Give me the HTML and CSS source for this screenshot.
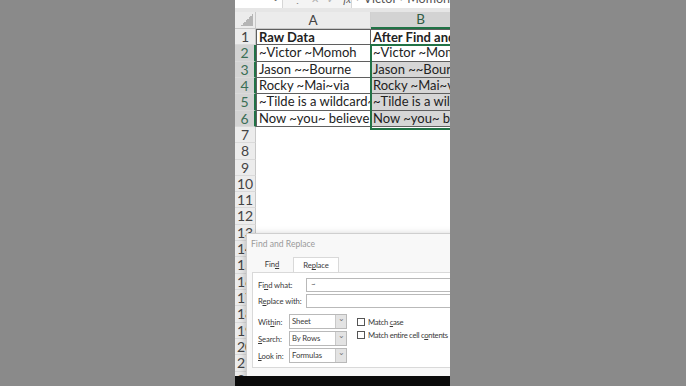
FILE: index.html
```html
<!DOCTYPE html>
<html lang="en">
<head>
    <meta charset="UTF-8">
    <title>Find and Replace</title>
    <link rel="stylesheet" href="styles.css">
</head>
<body>
    <div class="frame">
        <!-- formula bar, top cut off -->
        <div class="formula-bar">
            <div class="name-box"><span class="chev">&#8964;</span></div>
            <div class="fb-icons">
                <span class="dots">&#8942;</span>
                <span class="fb-btn">&#10005;</span>
                <span class="fb-btn">&#10003;</span>
                <span class="fx">fx</span>
            </div>
            <div class="formula-input">~Victor ~Momoh</div>
        </div>

        <!-- sheet grid -->
        <div class="sheet">
            <div class="corner"></div>
            <div class="col-head">A</div>
            <div class="col-head sel">B</div>

            <div class="rh">1</div>
            <div class="cell bd first-row first-col bold">Raw Data</div>
            <div class="cell bd first-row bold">After Find and Replace</div>

            <div class="rh sel">2</div>
            <div class="cell bd first-col">~Victor ~Momoh</div>
            <div class="cell bd">~Victor ~Momoh</div>

            <div class="rh sel">3</div>
            <div class="cell bd first-col">Jason ~~Bourne</div>
            <div class="cell bd hl">Jason ~~Bourne</div>

            <div class="rh sel">4</div>
            <div class="cell bd first-col">Rocky ~Mai~via</div>
            <div class="cell bd hl">Rocky ~Mai~via</div>

            <div class="rh sel">5</div>
            <div class="cell bd first-col">~Tilde is a wildcard~~</div>
            <div class="cell bd hl">~Tilde is a wildcard~~</div>

            <div class="rh sel">6</div>
            <div class="cell bd first-col">Now ~you~ believe ~it</div>
            <div class="cell bd hl">Now ~you~ believe ~it</div>

            <div class="rh">7</div>
            <div class="rh">8</div>
            <div class="rh">9</div>
            <div class="rh">10</div>
            <div class="rh">11</div>
            <div class="rh">12</div>
            <div class="rh">13</div>
            <div class="rh">14</div>
            <div class="rh">15</div>
            <div class="rh">16</div>
            <div class="rh">17</div>
            <div class="rh">18</div>
            <div class="rh">19</div>
            <div class="rh">20</div>
            <div class="rh">21</div>
            <div class="rh">22</div>

            <!-- green outline of the selected range B2:B6 -->
            <div class="selection"></div>
        </div>

        <!-- Find and Replace dialog -->
        <div class="dialog">
            <div class="dlg-title">Find and Replace</div>
            <div class="tabs">
                <div class="tab">Fin<u>d</u></div>
                <div class="tab active">Re<u>p</u>lace</div>
            </div>
            <div class="panel">
                <div class="field">
                    <label class="lbl-wide">Fi<u>n</u>d what:</label>
                    <div class="input">~</div>
                </div>
                <div class="field">
                    <label class="lbl-wide">R<u>e</u>place with:</label>
                    <div class="input"></div>
                </div>
                <div class="options">
                    <div class="selects">
                        <div class="opt-row">
                            <label class="lbl-short">Wit<u>h</u>in:</label>
                            <div class="select">Sheet<span class="drop">&#8964;</span></div>
                        </div>
                        <div class="opt-row">
                            <label class="lbl-short"><u>S</u>earch:</label>
                            <div class="select">By Rows<span class="drop">&#8964;</span></div>
                        </div>
                        <div class="opt-row">
                            <label class="lbl-short"><u>L</u>ook in:</label>
                            <div class="select">Formulas<span class="drop">&#8964;</span></div>
                        </div>
                    </div>
                    <div class="checks">
                        <div class="check"><span class="box"></span><span>Match <u>c</u>ase</span></div>
                        <div class="check"><span class="box"></span><span>Match entire cell c<u>o</u>ntents</span></div>
                    </div>
                </div>
            </div>
        </div>

        <div class="taskbar"></div>
    </div>
</body>
</html>
```

FILE: styles.css
```css
:root {
    --outside: #8a8a8a;
    --head-bg: #ececec;
    --head-sel: #d3d3d3;
    --cell-border: #5f5f5f;
    --excel-green: #217346;
    --dlg-text: #3a3a3a;
}

body {
    margin: 0;
    background: var(--outside);
    height: 386px;
    overflow: hidden;
}

.frame {
    position: relative;
    width: 215px;
    height: 386px;
    margin-left: 235px;
    background: #fff;
    overflow: hidden;
    font-family: Lato, "Liberation Sans", sans-serif;
}

/* formula bar */
.formula-bar {
    display: flex;
    height: 8px;
    border-bottom: 4px solid #e6e6e6;
    background: #f4f4f4;
    overflow: hidden;
}

.name-box {
    width: 67px;
    background: #fff;
    border-right: 1px solid #d6d6d6;
    position: relative;
}

.chev {
    position: absolute;
    right: 2px;
    top: -10px;
    font-size: 11px;
    color: #666;
}

.fb-icons {
    width: 69px;
    display: flex;
    align-items: flex-start;
    font-size: 11px;
    line-height: 1;
    margin-top: -6px;
    color: #b0b0b0;
}

.dots {
    margin-left: 9px;
    color: #888;
}

.fb-btn {
    margin-left: 8px;
    font-size: 10px;
}

.fx {
    margin-left: 8px;
    font-style: italic;
    color: #555;
    font-family: "Liberation Serif", serif;
}

.formula-input {
    flex: 1;
    background: #fff;
    border-left: 1px solid #d6d6d6;
    font-size: 12.5px;
    line-height: 1;
    margin-top: -7px;
    padding-left: 4px;
    color: #555;
    white-space: nowrap;
}

/* sheet */
.sheet {
    position: relative;
    display: grid;
    grid-template-columns: 21px 115px 100px;
    grid-template-rows: 17px;
    grid-auto-rows: 16.32px;
    font-size: 13px;
    color: #222;
}

.corner {
    background: var(--head-bg);
    border-right: 1px solid #c8c8c8;
    border-bottom: 1px solid #c8c8c8;
    position: relative;
}

.corner:after {
    content: '';
    position: absolute;
    right: 2px;
    bottom: 2px;
    width: 12px;
    height: 12px;
    background: linear-gradient(135deg, transparent 50%, #b5b5b5 50%);
}

.col-head {
    background: var(--head-bg);
    border-right: 1px solid #d0d0d0;
    border-bottom: 1px solid #c8c8c8;
    text-align: center;
    line-height: 16px;
    font-size: 13.5px;
    color: #444;
}

.col-head.sel {
    background: var(--head-sel);
    border-bottom: 2px solid var(--excel-green);
    color: #2f5c43;
    line-height: 15px;
}

.rh {
    grid-column: 1;
    background: var(--head-bg);
    border-right: 1px solid #c8c8c8;
    border-bottom: 1px solid #dadada;
    text-align: center;
    font-size: 14px;
    line-height: 16px;
    color: #444;
    overflow: hidden;
}

.rh.sel {
    background: var(--head-sel);
    color: #3a6e55;
    border-right: 2px solid var(--excel-green);
}

.cell {
    padding-left: 2px;
    line-height: 15px;
    white-space: nowrap;
    overflow: hidden;
}

.cell.bd {
    border-right: 1px solid var(--cell-border);
    border-bottom: 1px solid var(--cell-border);
}

.cell.first-row {
    border-top: 1px solid var(--cell-border);
    line-height: 14px;
}

.cell.first-col {
    border-left: 1px solid var(--cell-border);
}

.cell.bold {
    font-weight: bold;
}

.cell.hl {
    background: #d6d6d6;
}

.selection {
    position: absolute;
    left: 135px;
    top: 32.3px;
    width: 90px;
    height: 81.6px;
    border: 2px solid var(--excel-green);
    pointer-events: none;
}

/* dialog */
.dialog {
    position: absolute;
    left: 11px;
    top: 233px;
    width: 250px;
    height: 150px;
    background: #f8f8f8;
    border: 1px solid #cfcfcf;
    box-shadow: 0 2px 8px rgba(0, 0, 0, 0.25);
    font-family: Lato, "Noto Sans", sans-serif;
    font-size: 7.7px;
    letter-spacing: -0.1px;
    color: var(--dlg-text);
}

.dlg-title {
    height: 20px;
    line-height: 20px;
    padding-left: 4px;
    font-size: 8.6px;
    letter-spacing: 0;
    color: #9a9a9a;
}

.tabs {
    display: flex;
    margin: 3px 0 0 5px;
    height: 15px;
}

.tab {
    width: 40px;
    line-height: 15px;
    text-align: center;
}

.tab.active {
    width: 44px;
    margin-left: 1px;
    background: #fff;
    border: 1px solid #d9d9d9;
    border-bottom: none;
    line-height: 14px;
    position: relative;
    z-index: 1;
}

.panel {
    margin-left: 5px;
    height: 96px;
    background: #fff;
    border: 1px solid #d9d9d9;
    padding: 5px 0 0 5px;
    box-sizing: border-box;
}

.field {
    display: flex;
    align-items: center;
    height: 14px;
    margin-bottom: 2px;
}

.lbl-wide {
    width: 48px;
}

.input {
    flex: 1;
    height: 14px;
    box-sizing: border-box;
    border: 1px solid #b9b9b9;
    padding-left: 4px;
    line-height: 11px;
}

.options {
    display: flex;
    margin-top: 6px;
}

.opt-row {
    display: flex;
    align-items: center;
    height: 15px;
    margin-bottom: 2px;
}

.lbl-short {
    width: 31px;
}

.select {
    position: relative;
    width: 58px;
    height: 15px;
    box-sizing: border-box;
    border: 1px solid #b9b9b9;
    padding-left: 2px;
    line-height: 13px;
}

.drop {
    position: absolute;
    right: 0;
    top: 0;
    width: 10px;
    height: 13px;
    background: #e3e3e3;
    border-left: 1px solid #c9c9c9;
    text-align: center;
    line-height: 6px;
    color: #777;
}

.checks {
    margin-left: 10px;
    padding-top: 1px;
    letter-spacing: -0.3px;
}

.check {
    display: flex;
    align-items: center;
    height: 13px;
    white-space: nowrap;
}

.box {
    width: 8px;
    height: 8px;
    box-sizing: border-box;
    border: 1px solid #555;
    background: #fff;
    margin-right: 3px;
}

.taskbar {
    position: absolute;
    left: 0;
    right: 0;
    bottom: 0;
    height: 10px;
    background: #0b0b0b;
}
```
